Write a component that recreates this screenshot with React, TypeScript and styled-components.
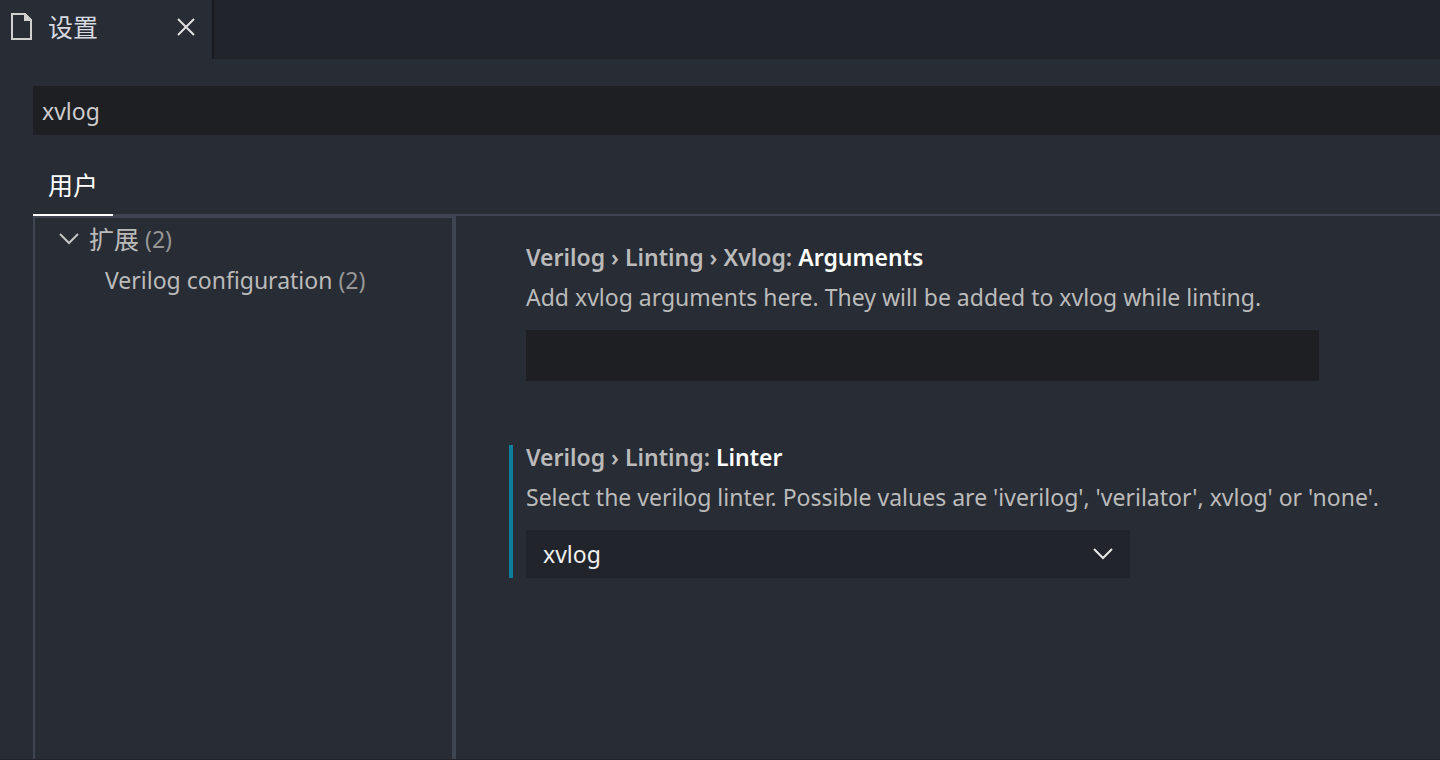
import React, { useState } from "react";
import styled, { createGlobalStyle } from "styled-components";

const GlobalStyle = createGlobalStyle`
  *, *::before, *::after { box-sizing: border-box; }
  body {
    margin: 0;
    background: #282c34;
    color: #bbbbbb;
    font-family: "Noto Sans", "Noto Sans CJK SC", sans-serif;
    font-size: 23px;
    line-height: 32px;
  }
  button, input, select { font: inherit; color: inherit; border: 0; border-radius: 0; margin: 0; }
`;

const Editor = styled.div`
  display: flex;
  flex-direction: column;
  min-height: 100vh;
  overflow: hidden;
  border-bottom: 1px solid #23242b;
`;

const TabStrip = styled.div`
  display: flex;
  height: 59px;
  background: #21252b;
`;

const EditorTab = styled.div`
  display: flex;
  align-items: center;
  width: 214px;
  padding: 0 16px 6px 11px;
  border-right: 2px solid #181a1f;
  background: #282c34;
  color: #d7dae0;
`;

const TabTitle = styled.span`
  flex: 1;
  padding-left: 15px;
  font-size: 25px;
`;

const IconButton = styled.button`
  display: flex;
  padding: 0;
  background: none;
`;

const SearchBar = styled.div`
  display: flex;
  padding: 27px 0 0 33px;
`;

const TextInput = styled.input<{ $height: number }>`
  width: 100%;
  max-width: 100%;
  height: ${(p) => p.$height}px;
  padding: 0 9px;
  background: #1d1f23;
  color: #cccccc;
  outline: none;
`;

const ScopeBar = styled.div`
  display: flex;
  height: 81px;
  margin-left: 33px;
  align-items: flex-end;
  border-bottom: 2px solid #3e4452;
`;

const ScopeTab = styled.button`
  height: 48px;
  margin-bottom: -2px;
  padding: 0 15px 12px;
  border-bottom: 2px solid #ffffff;
  background: none;
  color: #ffffff;
  font-size: 25px;
`;

const Body = styled.div`
  display: flex;
  flex: 1;
  margin-left: 33px;
`;

const Sidebar = styled.nav`
  flex: 0 0 423px;
  border: solid #3e4452;
  border-width: 2px 4px 0 2px;
`;

const TreeRow = styled.a<{ $indent: number }>`
  display: flex;
  align-items: center;
  height: 41px;
  padding-left: ${(p) => p.$indent}px;
  color: #bbbbbb;
  text-decoration: none;
`;

const GroupLabel = styled.span`
  padding-left: 9px;
  font-size: 25px;
`;

const Count = styled.span`
  padding-left: 6px;
  color: #969696;
`;

const Settings = styled.main`
  flex: 1;
  min-width: 0;
  padding: 29px 33px 40px 53px;
`;

const Setting = styled.section<{ $modified?: boolean }>`
  padding-left: 13px;
  margin-bottom: 64px;
  border-left: 4px solid ${(p) => (p.$modified ? "#0c7d9d" : "transparent")};
`;

const SettingTitle = styled.label`
  display: block;
  margin-bottom: 12px;
  line-height: 24px;
  font-weight: 600;
`;

const Name = styled.span`
  color: #ffffff;
`;

const Description = styled.p`
  margin: 0 0 17px;
  white-space: nowrap;
`;

const Control = styled.div<{ $width: number }>`
  display: flex;
  max-width: ${(p) => p.$width}px;
`;

const SelectBox = styled.div`
  display: grid;
  flex: 1;
  align-items: center;
  background: #21252b;
  color: #f0f0f0;

  > * { grid-area: 1 / 1; }
  svg { justify-self: end; margin-right: 16px; pointer-events: none; }
`;

const Select = styled.select`
  width: 100%;
  height: 48px;
  padding: 0 48px 0 17px;
  appearance: none;
  background: none;
  outline: none;
`;

const FileIcon = () => (
  <svg width="22" height="28" viewBox="0 0 22 28" aria-hidden="true">
    <path d="M1 1H14L20 7V26H1Z" fill="none" stroke="#d0d0ce" strokeWidth="2" />
    <path d="M13 0H14L21 7V8H13Z" fill="#d0d0ce" />
  </svg>
);

const CloseIcon = () => (
  <svg width="20" height="20" viewBox="0 0 20 20" aria-hidden="true">
    <path d="M2 2L18 18M18 2L2 18" stroke="#e0e0e0" strokeWidth="2" />
  </svg>
);

const ChevronIcon = ({ color }: { color: string }) => (
  <svg width="22" height="14" viewBox="0 0 22 14" aria-hidden="true">
    <path d="M2 2L11 11L20 2" fill="none" stroke={color} strokeWidth="2" />
  </svg>
);

export default function App() {
  const [query, setQuery] = useState("xvlog");
  const [args, setArgs] = useState("");
  const [linter, setLinter] = useState("xvlog");

  return (
    <>
      <GlobalStyle />
      <Editor lang="zh-CN">
        <TabStrip>
          <EditorTab>
            <FileIcon />
            <TabTitle>设置</TabTitle>
            <IconButton aria-label="关闭"><CloseIcon /></IconButton>
          </EditorTab>
        </TabStrip>
        <SearchBar>
          <TextInput $height={49} aria-label="搜索设置" value={query} onChange={(e) => setQuery(e.target.value)} />
        </SearchBar>
        <ScopeBar>
          <ScopeTab>用户</ScopeTab>
        </ScopeBar>
        <Body>
          <Sidebar>
            <TreeRow $indent={23} href="#extensions">
              <ChevronIcon color="#c5c5c5" />
              <GroupLabel>扩展</GroupLabel>
              <Count>(2)</Count>
            </TreeRow>
            <TreeRow $indent={70} href="#verilog">
              <span>Verilog configuration</span>
              <Count>(2)</Count>
            </TreeRow>
          </Sidebar>
          <Settings>
            <Setting>
              <SettingTitle htmlFor="arguments">Verilog › Linting › Xvlog: <Name>Arguments</Name></SettingTitle>
              <Description>Add xvlog arguments here. They will be added to xvlog while linting.</Description>
              <Control $width={793}>
                <TextInput id="arguments" $height={51} value={args} onChange={(e) => setArgs(e.target.value)} />
              </Control>
            </Setting>
            <Setting $modified>
              <SettingTitle htmlFor="linter">Verilog › Linting: <Name>Linter</Name></SettingTitle>
              <Description>Select the verilog linter. Possible values are 'iverilog', 'verilator', xvlog' or 'none'.</Description>
              <Control $width={604}>
                <SelectBox>
                  <Select id="linter" value={linter} onChange={(e) => setLinter(e.target.value)}>
                    <option>iverilog</option>
                    <option>verilator</option>
                    <option>xvlog</option>
                    <option>none</option>
                  </Select>
                  <ChevronIcon color="#e8e8e8" />
                </SelectBox>
              </Control>
            </Setting>
          </Settings>
        </Body>
      </Editor>
    </>
  );
}
